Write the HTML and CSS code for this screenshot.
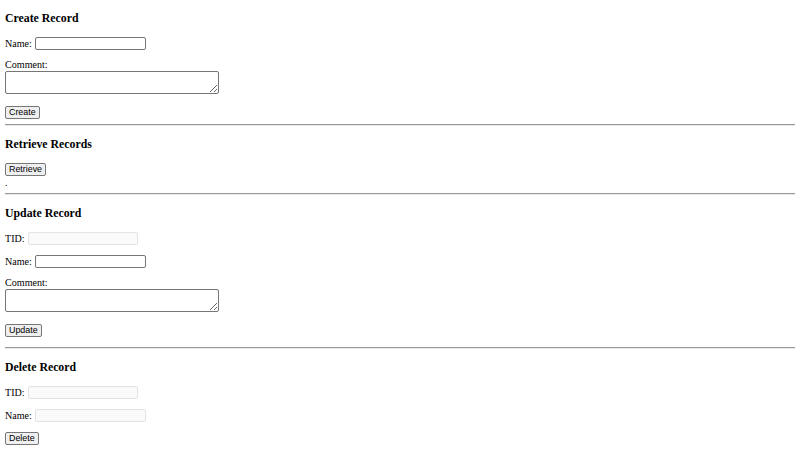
FILE: index.html
```html
<!DOCTYPE html>
<html>
<head>
<meta charset="utf-8">
<link rel="stylesheet" href="styles.css">
</head>
<body>
<section class="sec first">
  <h3 class="title">Create Record</h3>
  <div class="row gap-h"><label>Name:</label><input class="name" type="text"></div>
  <label class="block-label gap-m">Comment:</label>
  <textarea class="comment"></textarea>
  <div class="btn-row gap-h"><button>Create</button></div>
</section>
<hr class="rule r1">
<section class="sec">
  <h3 class="title">Retrieve Records</h3>
  <div class="btn-row gap-h"><button>Retrieve</button></div>
  <div class="records">.</div>
</section>
<hr class="rule r2">
<section class="sec">
  <h3 class="title">Update Record</h3>
  <div class="row gap-h"><label>TID:</label><input class="tid" type="text" disabled></div>
  <div class="row gap-s"><label>Name:</label><input class="name" type="text"></div>
  <label class="block-label gap-m">Comment:</label>
  <textarea class="comment"></textarea>
  <div class="btn-row gap-h"><button>Update</button></div>
</section>
<hr class="rule r3">
<section class="sec">
  <h3 class="title">Delete Record</h3>
  <div class="row gap-h"><label>TID:</label><input class="tid" type="text" disabled></div>
  <div class="row gap-s"><label>Name:</label><input class="name" type="text" disabled></div>
  <div class="btn-row gap-s"><button>Delete</button></div>
</section>
</body>
</html>
```
FILE: styles.css
```css
html, body {
  margin: 0;
  background: #fff;
}
body {
  padding: 0 5px;
  font-family: "Liberation Serif", "Times New Roman", serif;
  font-size: 10.1px;
  line-height: 12px;
  color: #000;
}
.sec {
  display: flex;
  flex-direction: column;
  align-items: flex-start;
  padding-top: 11px;
}
.title {
  margin: 0;
  font-size: 11.8px;
  line-height: 14px;
  font-weight: bold;
}
.row {
  display: flex;
  align-items: center;
  gap: 3px;
  height: 13px;
}
.gap-h { margin-top: 12px; }
.gap-s { margin-top: 10px; }
.gap-m { margin-top: 9px; }
.block-label {
  display: block;
  line-height: 12px;
  height: 12px;
}
input {
  box-sizing: border-box;
  height: 13px;
  margin: 0;
  padding: 0 2px;
  border: 1px solid #767676;
  border-radius: 2px;
  background: #fff;
  font-size: 9px;
}
input.name { width: 111px; }
input.tid { width: 110px; }
input:disabled {
  background: #fafafa;
  border-color: #e3e3e3;
}
.comment {
  box-sizing: border-box;
  display: block;
  width: 214px;
  height: 23px;
  margin: 0;
  padding: 1px;
  border: 1px solid #767676;
  border-radius: 2px;
  font-size: 9px;
}
.btn-row {
  display: flex;
}
button {
  box-sizing: border-box;
  height: 13px;
  margin: 0;
  padding: 0 3px;
  font-family: "Liberation Sans", Arial, sans-serif;
  font-size: 8.9px;
  line-height: 11px;
  color: #000;
  background: #efefef;
  border: 1px solid #767676;
  border-radius: 2px;
}
.records {
  margin-top: 1px;
  height: 12px;
  line-height: 12px;
}
.rule {
  margin: 0;
  height: 0;
  border: 0;
  border-top: 1px solid #9a9a9a;
  border-bottom: 1px solid #e8e8e8;
}
.r1 { margin-top: 5px; }
.r2 { margin-top: 4px; }
.r3 { margin-top: 10px; }
```
